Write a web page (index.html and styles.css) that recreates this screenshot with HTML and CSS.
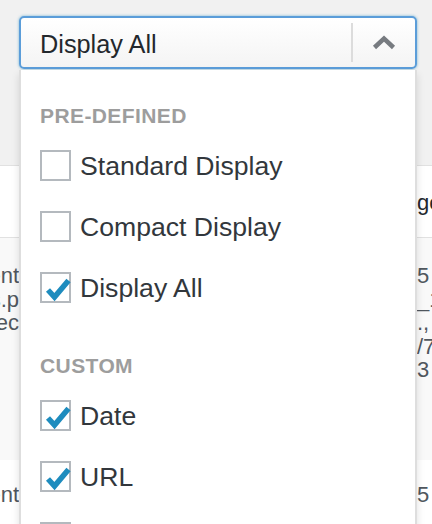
FILE: index.html
```html
<!DOCTYPE html>
<html lang="en">
<head>
<meta charset="utf-8">
<title>Display options</title>
<link rel="stylesheet" href="styles.css">
</head>
<body>
<div class="toolbar">
  <div class="dropdown">
    <div class="select">
      <span class="select-label">Display All</span>
      <span class="select-toggle">
        <svg class="chevron" width="26" height="16" viewBox="0 0 26 16"><polyline points="3.5,13.5 13,4.5 22.5,13.5" fill="none" stroke="#777b80" stroke-width="4.5" stroke-linejoin="miter"/></svg>
      </span>
    </div>
    <div class="menu">
      <div class="group">
        <div class="group-title">PRE-DEFINED</div>
        <label class="option"><span class="box"></span><span class="option-text">Standard Display</span></label>
        <label class="option"><span class="box"></span><span class="option-text">Compact Display</span></label>
        <label class="option"><span class="box"><svg class="check" width="31" height="31" viewBox="0 0 31 31"><polyline points="8,18 14.5,25 28.5,8.5" fill="none" stroke="#1e8cbe" stroke-width="5.5"/></svg></span><span class="option-text">Display All</span></label>
      </div>
      <div class="group">
        <div class="group-title">CUSTOM</div>
        <label class="option"><span class="box"><svg class="check" width="31" height="31" viewBox="0 0 31 31"><polyline points="8,18 14.5,25 28.5,8.5" fill="none" stroke="#1e8cbe" stroke-width="5.5"/></svg></span><span class="option-text">Date</span></label>
        <label class="option"><span class="box"><svg class="check" width="31" height="31" viewBox="0 0 31 31"><polyline points="8,18 14.5,25 28.5,8.5" fill="none" stroke="#1e8cbe" stroke-width="5.5"/></svg></span><span class="option-text">URL</span></label>
        <label class="option"><span class="box"></span></label>
      </div>
    </div>
  </div>
</div>
<div class="list">
  <div class="row head">
    <div class="cell first"></div>
    <div class="cell mid"></div>
    <div class="cell last"><span>ge</span></div>
  </div>
  <div class="row alt">
    <div class="cell first"><span>Agent</span><span>class.p</span><span>Redirec</span></div>
    <div class="cell mid"></div>
    <div class="cell last"><span>5</span><span>_1</span><span>.,</span><span>/7</span><span>3</span></div>
  </div>
  <div class="row">
    <div class="cell first"><span>Agent</span></div>
    <div class="cell mid"></div>
    <div class="cell last"><span>5</span></div>
  </div>
</div>
</body>
</html>
```

FILE: styles.css
```css
html, body {
  margin: 0;
  padding: 0;
}

body {
  background: #f1f1f1;
  font-family: "Liberation Sans", Arial, sans-serif;
  color: #32373c;
  width: 432px;
  height: 524px;
  overflow: hidden;
}

.toolbar {
  height: 165px;
  box-sizing: border-box;
  padding: 16px 0 0 19px;
}

.dropdown {
  position: relative;
  width: 398px;
  z-index: 2;
}

.select {
  height: 53px;
  box-sizing: border-box;
  border: 2px solid #5b9dd9;
  border-radius: 5px;
  background: linear-gradient(#ffffff, #f4f4f4);
  box-shadow: 0 0 3px rgba(30, 140, 190, 0.6);
  display: flex;
  align-items: center;
}

.select-label {
  flex: 1;
  padding: 3px 0 0 19px;
  font-size: 25.3px;
  color: #23282d;
}

.select-toggle {
  width: 62px;
  height: 39px;
  border-left: 2px solid #dcdcdc;
  display: flex;
  align-items: center;
  justify-content: center;
}

.chevron {
  display: block;
  margin-top: -2px;
}

.menu {
  position: absolute;
  top: 54px;
  left: 0;
  width: 398px;
  height: 520px;
  box-sizing: border-box;
  background: #ffffff;
  border-left: 2px solid #dedede;
  border-right: 2px solid #dedede;
  box-shadow: 0 4px 8px rgba(0, 0, 0, 0.12);
  padding: 34px 19px 0 19px;
}

.group + .group {
  margin-top: 36px;
}

.group-title {
  font-size: 21px;
  line-height: 24px;
  font-weight: bold;
  letter-spacing: 0.4px;
  color: #9d9d9d;
  margin-bottom: 7px;
}

.option {
  height: 61px;
  display: flex;
  align-items: center;
  gap: 9px;
}

.box {
  width: 31px;
  height: 31px;
  box-sizing: border-box;
  border: 2px solid #b4b9be;
  background: #ffffff;
  position: relative;
  flex: none;
}

.check {
  position: absolute;
  left: -2px;
  top: -2px;
}

.option-text {
  font-size: 26.6px;
  padding-top: 2px;
  color: #32373c;
}

.list {
  background: #ffffff;
  border-top: 1px solid #e1e1e1;
  position: relative;
  z-index: 1;
}

.row {
  display: grid;
  grid-template-columns: 19px 1fr 15px;
  background: #ffffff;
}

.row.head {
  height: 71px;
  border-bottom: 1px solid #e1e1e1;
}

.row.alt {
  height: 222px;
  background: #f9f9f9;
}

.row:last-child {
  height: 70px;
}

.cell {
  padding-top: 26px;
  font-size: 22px;
  line-height: 23.5px;
  color: #50575e;
  overflow: hidden;
  white-space: nowrap;
  display: flex;
  flex-direction: column;
}

.row:last-child .cell {
  padding-top: 23px;
}

.cell.first {
  align-items: flex-end;
}

.cell.last {
  align-items: flex-start;
}

.row.head .cell {
  color: #23282d;
  padding-top: 25px;
}
```
